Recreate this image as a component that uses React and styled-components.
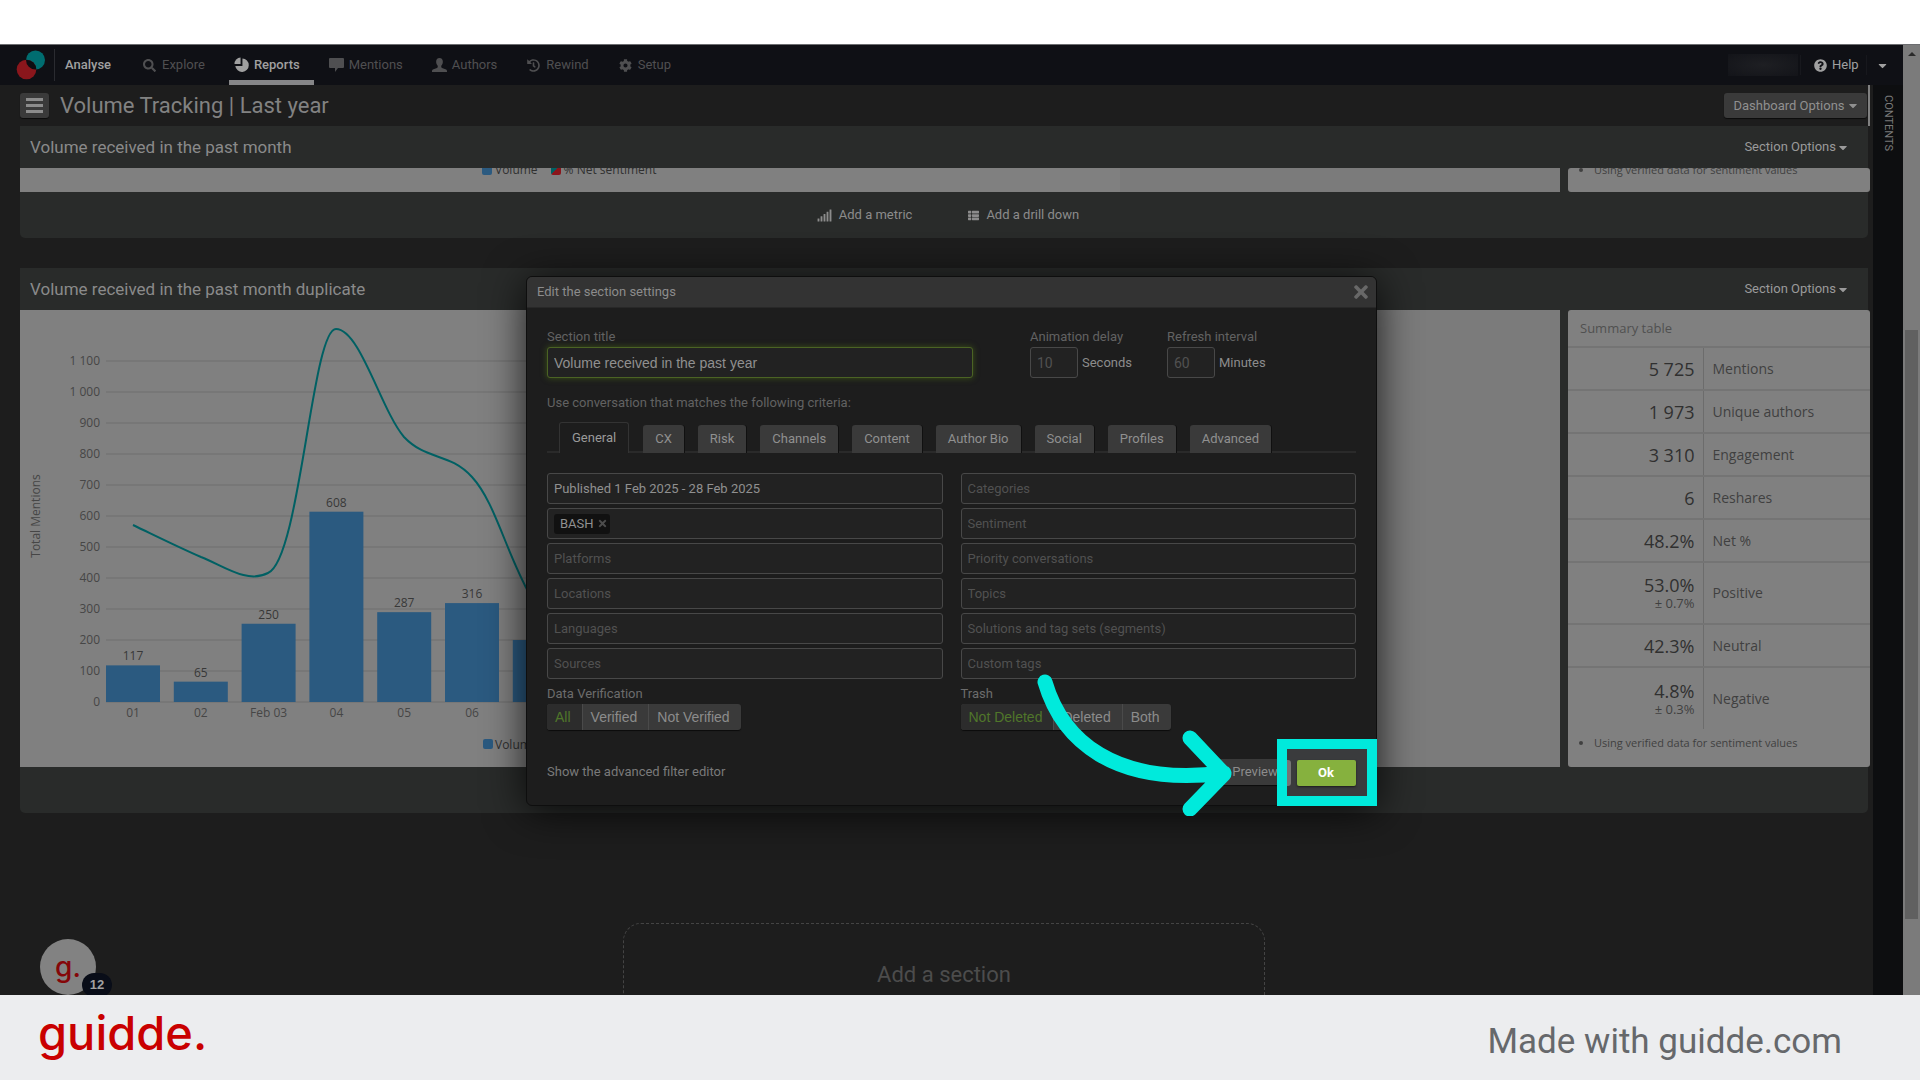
import styled, { createGlobalStyle, css } from "styled-components";
import {
  FaCaretDown,
  FaCog,
  FaHistory,
  FaQuestionCircle,
  FaSearch,
  FaSignal,
  FaThList,
  FaTimes,
} from "react-icons/fa";

const navItems = [
  { label: "Explore", icon: <FaSearch /> },
  { label: "Reports", icon: <PieIcon />, active: true },
  { label: "Mentions", icon: <BubbleIcon /> },
  { label: "Authors", icon: <PersonIcon /> },
  { label: "Rewind", icon: <FaHistory /> },
  { label: "Setup", icon: <FaCog /> },
];

const tabs = [
  "General",
  "CX",
  "Risk",
  "Channels",
  "Content",
  "Author Bio",
  "Social",
  "Profiles",
  "Advanced",
];

const leftFilters = ["Platforms", "Locations", "Languages", "Sources"];

const rightFilters = [
  "Categories",
  "Sentiment",
  "Priority conversations",
  "Topics",
  "Solutions and tag sets (segments)",
  "Custom tags",
];

const summary = [
  { value: "5 725", label: "Mentions" },
  { value: "1 973", label: "Unique authors" },
  { value: "3 310", label: "Engagement" },
  { value: "6", label: "Reshares" },
  { value: "48.2%", label: "Net %" },
  { value: "53.0%", error: "± 0.7%", label: "Positive" },
  { value: "42.3%", label: "Neutral" },
  { value: "4.8%", error: "± 0.3%", label: "Negative" },
];

const bars = [
  { day: "01", value: 117 },
  { day: "02", value: 65 },
  { day: "Feb 03", value: 250 },
  { day: "04", value: 608 },
  { day: "05", value: 287 },
  { day: "06", value: 316 },
  { day: "07", value: 198 },
];

const ticks = [0, 100, 200, 300, 400, 500, 600, 700, 800, 900, 1000, 1100];

function PieIcon() {
  return (
    <svg viewBox="0 0 16 16" width="16" height="16" fill="currentColor">
      <path d="M9 1a7.2 7.2 0 1 1-7.6 8H9z" />
      <path d="M7 0v7H0.5A7 7 0 0 1 7 0z" />
    </svg>
  );
}

function BubbleIcon() {
  return (
    <svg viewBox="0 0 15 14" width="15" height="14" fill="currentColor">
      <path d="M1 0h13a1 1 0 0 1 1 1v8a1 1 0 0 1-1 1H9l-3 4v-4H1a1 1 0 0 1-1-1V1a1 1 0 0 1 1-1z" />
    </svg>
  );
}

function PersonIcon() {
  return (
    <svg viewBox="0 0 17 16" width="17" height="16" fill="currentColor">
      <path d="M8.500 0c2.500 0 3.800 1.700 3.800 4.200 0 2-.8 3.500-1.800 4.600v1.400c0 .6.300.8.900 1.100l3.900 1.500c1.100.5 1.700 1 1.700 2.200v1H0v-1c0-1.200.6-1.700 1.700-2.200l3.900-1.500c.6-.3.9-.5.900-1.100V8.800C5.500 7.700 4.700 6.200 4.700 4.200 4.700 1.700 6 0 8.500 0z" />
    </svg>
  );
}

const BrandIcon = () => (
  <svg viewBox="0 0 30 30" width="30" height="30">
    <defs>
      <clipPath id="teal-disc">
        <circle cx="19.500" cy="10" r="9.500" />
      </clipPath>
    </defs>
    <circle cx="19.500" cy="10" r="9.500" fill="#006d70" />
    <circle cx="10.500" cy="19.500" r="9.800" fill="#8a161c" />
    <circle cx="10.500" cy="19.500" r="9.800" fill="#0c0d12" clipPath="url(#teal-disc)" />
  </svg>
);

const Chart = () => (
  <ChartSvg viewBox="0 1 1100 457" width="1100" height="457">
    {ticks.map((tick) => {
      const y = 393 - tick * 0.31;
      return (
        <g key={tick}>
          <line x1="86" x2="1100" y1={y} y2={y} stroke="#757575" strokeWidth="1.500" />
          <text x="80" y={y + 4} textAnchor="end">
            {tick >= 1000 ? `1 ${String(tick).slice(1)}` : tick}
          </text>
        </g>
      );
    })}
    {bars.map(({ day, value }, i) => {
      const x = 86 + i * 67.8;
      const height = value * 0.313;
      return (
        <g key={day}>
          <rect x={x} y={393 - height} width="54" height={height} fill="#2b5a80" />
          <text x={x + 27} y={388 - height} textAnchor="middle" fill="#383838">
            {value}
          </text>
          <text x={x + 27} y="408" textAnchor="middle">
            {day}
          </text>
        </g>
      );
    })}
    <path
      d="M113 216C136 227 158 238 181 248C204 257 227 275 248 264C280 251 292 20 316 20C340 20 361 101 384 128C407 152 429 143 452 168C475 193 485 241 510 286"
      fill="none"
      stroke="#006063"
      strokeWidth="2"
    />
    <text transform="translate(20 207) rotate(-90)" textAnchor="middle">
      Total Mentions
    </text>
    <rect x="463" y="430" width="10" height="10" rx="2" fill="#2b5a80" />
    <text x="475" y="440" fill="#303030">
      Volume
    </text>
  </ChartSvg>
);

const SummaryPanel = () => (
  <SummaryCard>
    <SummaryTable>
      <caption>Summary table</caption>
      <tbody>
        {summary.map(({ value, error, label }) => (
          <SummaryRow key={label} $tall={Boolean(error)}>
            <td>
              {value}
              {error && <small>{error}</small>}
            </td>
            <th scope="row">{label}</th>
          </SummaryRow>
        ))}
      </tbody>
    </SummaryTable>
    <Footnote>
      <li>Using verified data for sentiment values</li>
    </Footnote>
  </SummaryCard>
);

const SectionDialog = () => (
  <Dialog role="dialog" aria-labelledby="dialog-title">
    <DialogHeader>
      <DialogTitle id="dialog-title">Edit the section settings</DialogTitle>
      <CloseButton aria-label="Close">
        <FaTimes />
      </CloseButton>
    </DialogHeader>
    <DialogBody>
      <SettingsRow>
        <Setting>
          <Label htmlFor="section-title">Section title</Label>
          <TitleInput id="section-title" defaultValue="Volume received in the past year" />
        </Setting>
        <Setting>
          <Label htmlFor="delay">Animation delay</Label>
          <Amount>
            <NumberInput id="delay" placeholder="10" />
            Seconds
          </Amount>
        </Setting>
        <Setting>
          <Label htmlFor="refresh">Refresh interval</Label>
          <Amount>
            <NumberInput id="refresh" placeholder="60" />
            Minutes
          </Amount>
        </Setting>
      </SettingsRow>
      <Hint>Use conversation that matches the following criteria:</Hint>
      <TabList role="tablist">
        {tabs.map((tab, i) => (
          <Tab key={tab} role="tab" aria-selected={i === 0} $active={i === 0}>
            {tab}
          </Tab>
        ))}
      </TabList>
      <Filters>
        <FilterColumn>
          <FilterInput aria-label="Published" defaultValue="Published 1 Feb 2025 - 28 Feb 2025" />
          <TokenField>
            <Token>
              BASH
              <TokenRemove aria-label="Remove BASH">
                <FaTimes />
              </TokenRemove>
            </Token>
          </TokenField>
          {leftFilters.map((name) => (
            <FilterInput key={name} aria-label={name} placeholder={name} />
          ))}
        </FilterColumn>
        <FilterColumn>
          {rightFilters.map((name) => (
            <FilterInput key={name} aria-label={name} placeholder={name} />
          ))}
        </FilterColumn>
        <div>
          <GroupLabel>Data Verification</GroupLabel>
          <ButtonGroup>
            <GroupButton $active>All</GroupButton>
            <GroupButton>Verified</GroupButton>
            <GroupButton>Not Verified</GroupButton>
          </ButtonGroup>
        </div>
        <div>
          <GroupLabel>Trash</GroupLabel>
          <ButtonGroup>
            <GroupButton $active>Not Deleted</GroupButton>
            <GroupButton>Deleted</GroupButton>
            <GroupButton>Both</GroupButton>
          </ButtonGroup>
        </div>
      </Filters>
      <DialogFooter>
        <AdvancedLink href="#advanced">Show the advanced filter editor</AdvancedLink>
        <PreviewButton>Preview</PreviewButton>
      </DialogFooter>
    </DialogBody>
    <Spotlight>
      <OkButton>Ok</OkButton>
    </Spotlight>
    <Arrow viewBox="0 0 210 150" width="210" height="150">
      <path d="M19 16C36 74 88 121 198 107M164 72L198 108L164 143" />
    </Arrow>
  </Dialog>
);

const App = () => {
  return (
    <Page>
      <GlobalStyle />
      <TopBand />
      <Screen>
        <Main>
          <Nav>
            <Brand>
              <BrandIcon />
            </Brand>
            <Product>Analyse</Product>
            {navItems.map(({ label, icon, active }) => (
              <NavLink key={label} href={`#${label.toLowerCase()}`} $active={active}>
                {icon}
                {label}
              </NavLink>
            ))}
            <Account>
              <UserName />
              <HelpLink href="#help">
                <FaQuestionCircle />
                Help
              </HelpLink>
              <MenuButton aria-label="Account menu">
                <FaCaretDown />
              </MenuButton>
            </Account>
          </Nav>
          <Workspace>
            <Content>
              <TitleBar>
                <SideMenuButton aria-label="Menu">
                  <span />
                  <span />
                  <span />
                </SideMenuButton>
                <PageTitle>Volume Tracking | Last year</PageTitle>
                <DashboardButton>
                  Dashboard Options
                  <FaCaretDown />
                </DashboardButton>
              </TitleBar>
              <Section>
                <SectionHeader>
                  <SectionTitle>Volume received in the past month</SectionTitle>
                  <SectionOptions>
                    Section Options
                    <FaCaretDown />
                  </SectionOptions>
                </SectionHeader>
                <Cards>
                  <ChartCard $clipped>
                    <Legend>
                      <Swatch $color="#2b5a80" />
                      Volume
                      <Swatch $color="linear-gradient(135deg, #006063 50%, #8a161c 50%)" />
                      % Net sentiment
                    </Legend>
                  </ChartCard>
                  <SummaryCard $clipped>
                    <Footnote>
                      <li>Using verified data for sentiment values</li>
                    </Footnote>
                  </SummaryCard>
                </Cards>
                <SectionFooter>
                  <AddButton>
                    <FaSignal size={15} />
                    Add a metric
                  </AddButton>
                  <AddButton>
                    <FaThList size={11} />
                    Add a drill down
                  </AddButton>
                </SectionFooter>
              </Section>
              <Section>
                <SectionHeader>
                  <SectionTitle>Volume received in the past month duplicate</SectionTitle>
                  <SectionOptions>
                    Section Options
                    <FaCaretDown />
                  </SectionOptions>
                </SectionHeader>
                <Cards>
                  <ChartCard>
                    <Chart />
                  </ChartCard>
                  <SummaryPanel />
                </Cards>
                <SectionFooter />
              </Section>
              <AddSection>Add a section</AddSection>
            </Content>
            <ContentsBar>CONTENTS</ContentsBar>
          </Workspace>
          <Overlay>
            <SectionDialog />
          </Overlay>
          <Launcher aria-label="Guides">
            g.
            <Badge>12</Badge>
          </Launcher>
        </Main>
        <Scrollbar>
          <ScrollArrow />
          <ScrollThumb />
        </Scrollbar>
      </Screen>
      <PageFooter>
        <Wordmark>guidde.</Wordmark>
        <Credit>Made with guidde.com</Credit>
      </PageFooter>
    </Page>
  );
};

const GlobalStyle = createGlobalStyle`
  * {
    box-sizing: border-box;
  }

  body {
    margin: 0;
    font-family: Roboto, sans-serif;
    font-size: 13px;
    line-height: 20px;
  }

  button,
  input {
    margin: 0;
    padding: 0;
    border: 0;
    font: inherit;
  }

  button {
    background: none;
    color: inherit;
    cursor: pointer;
  }

  a {
    text-decoration: none;
  }

  svg {
    flex-shrink: 0;
  }
`;

const Page = styled.div`
  display: flex;
  flex-direction: column;
  height: 100vh;
  background: #fff;
`;

const TopBand = styled.div`
  flex: 0 0 44px;
`;

const Screen = styled.div`
  display: flex;
  flex: 1;
  min-height: 0;
  overflow: hidden;
  border-top: 1px solid #6c6d70;
`;

const Main = styled.main`
  position: relative;
  display: flex;
  flex-direction: column;
  flex: 1;
  min-width: 0;
  overflow: hidden;
  background: #1d1d1d;
`;

const Nav = styled.nav`
  display: flex;
  align-items: stretch;
  flex: 0 0 40px;
  background: #0f1015;
  color: #a0a0a0;
`;

const Brand = styled.div`
  display: flex;
  align-items: center;
  margin: 4px 0;
  padding: 0 8px 0 16px;
  border-right: 1px solid #2a2b30;
`;

const Product = styled.span`
  align-self: center;
  width: 72px;
  margin-left: 10px;
  font-weight: 500;
`;

const NavLink = styled.a`
  display: flex;
  align-items: center;
  gap: 5px;
  margin-right: 10px;
  padding: 0 14px 0 5px;
  border-bottom: 5px solid transparent;
  border-top: 5px solid transparent;
  color: #4f4f51;

  svg {
    width: 15px;
  }

  ${({ $active }) =>
    $active &&
    css`
      border-bottom-color: #868688;
      color: #a0a0a0;
      font-weight: 500;
    `}
`;

const Account = styled.div`
  display: flex;
  align-items: center;
  margin-left: auto;
`;

const UserName = styled.span`
  width: 70px;
  height: 22px;
  margin-right: 2px;
  background: radial-gradient(#1e1f23, #131419);
`;

const HelpLink = styled.a`
  display: flex;
  align-items: center;
  gap: 5px;
  width: 67px;
  padding-left: 13px;
  border: solid #17181d;
  border-width: 0 1px;
  color: #a0a0a0;
`;

const MenuButton = styled.button`
  display: flex;
  justify-content: center;
  width: 36px;
  padding-right: 5px;
`;

const Workspace = styled.div`
  display: flex;
  flex: 1;
  min-height: 0;
`;

const Content = styled.div`
  flex: 1;
  min-width: 0;
  padding: 0 5px 0 20px;
`;

const TitleBar = styled.header`
  display: flex;
  align-items: center;
  height: 41px;
  margin-right: -2px;
  padding-right: 1px;
  border-right: 2px solid #808080;
  color: #828282;
`;

const raised = css`
  border-radius: 3px;
  background: #3a3a3a;
  box-shadow: 0 1px 1px #0c0c0c;
`;

const SideMenuButton = styled.button`
  ${raised}
  display: flex;
  flex-direction: column;
  align-items: center;
  justify-content: center;
  gap: 3px;
  width: 29px;
  height: 25px;

  span {
    width: 17px;
    height: 3px;
    background: #8c8c8c;
  }
`;

const PageTitle = styled.h1`
  margin: 0 0 0 11px;
  font-size: 22px;
  font-weight: 400;
  line-height: 32px;
`;

const DashboardButton = styled.button`
  ${raised}
  display: flex;
  align-items: center;
  justify-content: center;
  gap: 3px;
  width: 143px;
  height: 25px;
  margin-left: auto;
  color: #909090;

  svg {
    width: 10px;
  }
`;

const Section = styled.section`
  margin-bottom: 30px;
  border-radius: 0 0 5px 5px;
  background: #292b2a;
`;

const SectionHeader = styled.header`
  display: flex;
  align-items: center;
  justify-content: space-between;
  height: 42px;
  padding: 0 20px 0 10px;
  color: #8a8a8a;
`;

const SectionTitle = styled.h2`
  margin: 0;
  font-size: 17px;
  font-weight: 400;
`;

const SectionOptions = styled.button`
  display: flex;
  align-items: center;
  gap: 2px;
  color: #9a9a9a;

  svg {
    width: 10px;
  }
`;

const Cards = styled.div`
  display: grid;
  grid-template-columns: minmax(0, 1fr) 302px;
  gap: 8px;
  margin-right: -2px;
`;

const card = css`
  height: ${({ $clipped }) => ($clipped ? "24px" : "457px")};
  overflow: hidden;
  background-color: #808080;
`;

const ChartCard = styled.div`
  ${card}
  background-image: linear-gradient(90deg, transparent 1100px, #7b7b7b 1100px);
`;

const ChartSvg = styled.svg`
  display: block;
  font-family: "Open Sans", sans-serif;
  font-size: 12px;
  fill: #464646;
`;

const Legend = styled.div`
  display: flex;
  align-items: center;
  gap: 3px;
  margin: -8px 0 0 462px;
  color: #303030;
  font-family: "Open Sans", sans-serif;
  font-size: 12px;
`;

const Swatch = styled.span`
  width: 10px;
  height: 10px;
  border-radius: 2px;
  background: ${({ $color }) => $color};

  &:not(:first-child) {
    margin-left: 10px;
  }
`;

const SummaryCard = styled.div`
  ${card}
  border-radius: 3px;
  font-family: "Open Sans", sans-serif;

  > ul:first-child {
    margin-top: -8px;
  }
`;

const SummaryTable = styled.table`
  width: 100%;
  border-collapse: collapse;
  color: #303030;
  font-size: 18px;
  line-height: 20px;

  caption {
    padding: 8px 12px;
    color: #505050;
    font-size: 13px;
    text-align: left;
  }
`;

const SummaryRow = styled.tr`
  height: ${({ $tall }) => ($tall ? "62px" : "43px")};
  border-top: 2px solid #747474;

  td {
    width: 135px;
    padding: 0 8px 0 0;
    border-right: 1px solid #6c6c6c;
    text-align: right;
  }

  small {
    display: block;
    color: #404040;
    font-size: 13px;
    line-height: 16px;
  }

  th {
    padding: 0 0 0 9px;
    color: #404040;
    font-size: 14px;
    font-weight: 400;
    text-align: left;
  }
`;

const Footnote = styled.ul`
  margin: 4px 0 0;
  padding-left: 26px;
  color: #404040;
  font-size: 11px;
`;

const SectionFooter = styled.footer`
  display: flex;
  align-items: center;
  justify-content: center;
  gap: 56px;
  height: 46px;
  padding-left: 8px;
`;

const AddButton = styled.button`
  display: flex;
  align-items: center;
  gap: 7px;
  color: #8c8c8c;
`;

const AddSection = styled.button`
  display: block;
  width: 642px;
  height: 104px;
  margin: 110px auto 0;
  border: 1px dashed #444;
  border-radius: 18px;
  color: #4c4c4c;
  font-size: 22px;
`;

const ContentsBar = styled.aside`
  flex: 0 0 30px;
  padding: 10px 5px;
  background: #0d0e10;
  color: #7a7a7a;
  font-size: 11px;
  writing-mode: vertical-rl;
`;

const Overlay = styled.div`
  position: absolute;
  inset: 0;
  display: flex;
  align-items: flex-start;
  justify-content: center;
  padding-top: 231px;
`;

const Dialog = styled.div`
  position: relative;
  width: 851px;
  border: 1px solid #0e0e0e;
  border-radius: 6px;
  background: #1d1d1d;
  box-shadow: 0 5px 40px rgba(0, 0, 0, 0.8);
  color: #8c8c8c;
`;

const DialogHeader = styled.header`
  display: flex;
  align-items: center;
  justify-content: space-between;
  height: 31px;
  padding: 0 5px 0 10px;
  border-bottom: 1px solid #282828;
  border-radius: 5px 5px 0 0;
  background: #333;
`;

const DialogTitle = styled.h2`
  margin: 0;
  font-size: 13px;
  font-weight: 400;
`;

const CloseButton = styled.button`
  display: flex;
  color: #686868;
  font-size: 20px;
`;

const DialogBody = styled.div`
  padding: 19px 20px 20px;
`;

const SettingsRow = styled.div`
  display: flex;
`;

const Setting = styled.div`
  width: 137px;

  &:first-child {
    width: 483px;
  }
`;

const Label = styled.label`
  display: block;
  color: #626262;
`;

const box = css`
  display: block;
  height: 31px;
  padding: 0 6px;
  border: 1px solid #484848;
  border-radius: 3px;
  background: #222;
  color: #909090;
  outline: none;

  &::placeholder {
    color: #515151;
    opacity: 1;
  }
`;

const TitleInput = styled.input`
  ${box}
  width: 426px;
  border-color: #4b6324;
  box-shadow: 0 0 6px #3c5218;
  font-family: "Liberation Sans", sans-serif;
  font-size: 14px;
`;

const NumberInput = styled.input`
  ${box}
  width: 48px;
  font-size: 14px;
`;

const Amount = styled.div`
  display: flex;
  align-items: center;
  gap: 4px;
`;

const Hint = styled.p`
  margin: 15px 0 9px;
  color: #626262;
`;

const TabList = styled.div`
  display: flex;
  align-items: flex-end;
  gap: 14px;
  height: 31px;
  padding-left: 12px;
  box-shadow: inset 0 -2px #2a2a2a;
`;

const Tab = styled.button`
  height: 28px;
  padding: 0 12px;
  border-radius: 3px 3px 0 0;
  background: #3a3a3a;
  box-shadow: 1px 0 #101010;
  color: #909090;

  ${({ $active }) =>
    $active &&
    css`
      height: 31px;
      border: 1px solid #333;
      border-bottom: 0;
      background: #1d1d1d;
      box-shadow: none;
      color: #9a9a9a;
    `}
`;

const Filters = styled.div`
  display: grid;
  grid-template-columns: 1fr 1fr;
  gap: 4px 18px;
  margin-top: 20px;
`;

const FilterColumn = styled.div`
  display: flex;
  flex-direction: column;
  gap: 4px;
`;

const FilterInput = styled.input`
  ${box}
  width: 100%;
`;

const TokenField = styled.div`
  ${box}
  display: flex;
  align-items: center;
`;

const Token = styled.span`
  display: flex;
  align-items: center;
  gap: 3px;
  height: 20px;
  padding: 0 2px 0 6px;
  border-radius: 3px;
  background: #111;
`;

const TokenRemove = styled.button`
  display: flex;
  color: #4c4c4c;
  font-size: 11px;
`;

const GroupLabel = styled.div`
  margin-top: 1px;
  color: #6c6c6c;
`;

const ButtonGroup = styled.div`
  ${raised}
  display: inline-flex;
  overflow: hidden;
  vertical-align: top;
`;

const GroupButton = styled.button`
  height: 26px;
  padding: 0 11px 0 8px;
  border-left: 1px solid #4a4a4a;
  color: #8c8c8c;
  font-family: "Liberation Sans", sans-serif;
  font-size: 14px;

  &:first-child {
    border-left: 0;
  }

  ${({ $active }) =>
    $active &&
    css`
      background: #2c2c2c;
      color: #50762a;
    `}
`;

const DialogFooter = styled.footer`
  display: flex;
  align-items: center;
  justify-content: space-between;
  margin-top: 29px;
  padding-right: 65px;
`;

const AdvancedLink = styled.a`
  color: #7a7a7a;
`;

const PreviewButton = styled.button`
  ${raised}
  width: 72px;
  height: 26px;
`;

/* cyan frame laid over the dialog's bottom right corner */
const Spotlight = styled.div`
  position: absolute;
  right: -1px;
  bottom: -1px;
  display: flex;
  align-items: center;
  justify-content: center;
  width: 100px;
  height: 67px;
  padding-right: 2px;
  border: 10px solid #00eadc;
  background: #3a3b3d;

  &::before {
    content: "";
    position: absolute;
    left: 0;
    width: 4px;
    height: 26px;
    border-radius: 0 3px 3px 0;
    background: #757575;
  }
`;

const OkButton = styled.button`
  width: 59px;
  height: 26px;
  border-radius: 2px;
  background: #86b13e;
  box-shadow: 0 1px 2px #1d1d1d;
  color: #fff;
  font-weight: 700;
`;

const Arrow = styled.svg`
  position: absolute;
  right: 140px;
  bottom: -11px;
  fill: none;
  stroke: #00eadc;
  stroke-width: 15px;
  stroke-linecap: round;
  stroke-linejoin: round;
  pointer-events: none;
`;

const Launcher = styled.button`
  position: absolute;
  bottom: 0;
  left: 40px;
  width: 56px;
  height: 56px;
  border-radius: 50%;
  background: #828282;
  color: #850608;
  font-family: Inter, sans-serif;
  font-size: 28px;
  font-weight: 500;
`;

const Badge = styled.span`
  position: absolute;
  right: -16px;
  bottom: -2px;
  width: 30px;
  height: 24px;
  border-radius: 12px;
  background: #090d18;
  color: #a0a0a0;
  font-family: "Liberation Sans", sans-serif;
  font-size: 13px;
  font-weight: 700;
  line-height: 24px;
`;

const Scrollbar = styled.div`
  display: flex;
  flex-direction: column;
  align-items: center;
  flex: 0 0 17px;
  background: #7b7b7b;
`;

const ScrollArrow = styled.div`
  margin-top: 7px;
  border: 4px solid transparent;
  border-top: 0;
  border-bottom: 4px solid #2a2a2a;
`;

const ScrollThumb = styled.div`
  width: 13px;
  height: 62%;
  margin-top: 274px;
  background: #606060;
`;

const PageFooter = styled.footer`
  display: flex;
  align-items: center;
  justify-content: space-between;
  flex: 0 0 85px;
  padding: 0 78px 0 38px;
  background: #ecedef;
`;

const Wordmark = styled.strong`
  margin-bottom: 10px;
  color: #c90000;
  font-family: Inter, sans-serif;
  font-size: 47px;
  font-weight: 500;
  line-height: 60px;
`;

const Credit = styled.span`
  margin-top: 8px;
  color: #66686b;
  font-size: 35px;
  line-height: 44px;
`;

export default App;
